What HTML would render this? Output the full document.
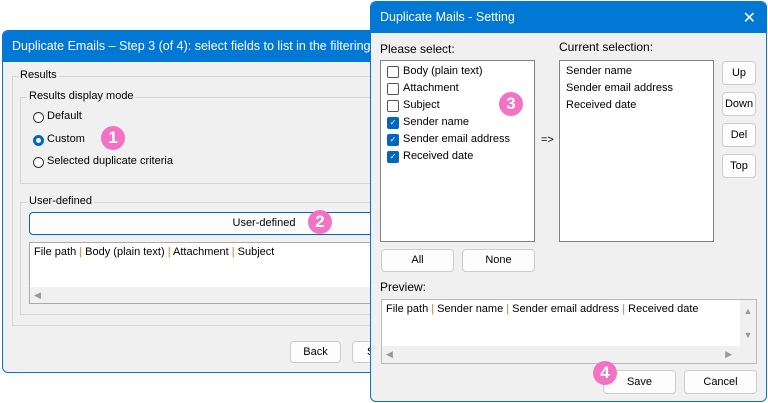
<!DOCTYPE html><html><head><style>
body{margin:0;width:768px;height:403px;background:#fff;position:relative;overflow:hidden;font-family:"Liberation Sans",sans-serif;font-size:11px;color:#000}
.a{position:absolute}
.dlg{background:#f0f0f0;border:1px solid #0078d4;border-radius:6px;overflow:hidden}
.tb{background:#0078d4;color:#fff;font-size:12.5px;position:absolute;left:0;right:0;top:0}
.gb{border:1px solid #d5d5d5;position:absolute}
.gl{position:absolute;background:#f0f0f0;padding:0 2px;top:-8px;left:6px}
.btn{position:absolute;background:#fdfdfd;border:1px solid #ccc;border-radius:4px;text-align:center;box-sizing:border-box}
.box{position:absolute;background:#fff;border:1px solid #828282;box-sizing:border-box}
.rad{position:absolute;width:11px;height:11px;border:1px solid #333;border-radius:50%;box-sizing:border-box;background:#fff}
.cb{position:absolute;width:12px;height:12px;border:1px solid #555;border-radius:2px;box-sizing:border-box;left:6px;background:#fff}
.cb.on{background:#0067c0;border-color:#0067c0;color:#fff;font-size:8px;line-height:10px;text-align:center}
.bd{position:absolute;width:24px;height:24px;border-radius:50%;background:#f472c3;color:#fff;font-weight:bold;font-size:17px;text-align:center;line-height:24px}
.s{color:#d08020}
</style></head><body>
<div class="a dlg" style="left:2px;top:30px;width:380px;height:341px">
 <div class="tb" style="height:31px;line-height:31px;padding-left:9px;white-space:nowrap">Duplicate Emails – Step 3 (of 4): select fields to list in the filtering results</div>
 <div class="gb" style="left:9px;top:45px;width:380px;height:248px"><div class="gl" style="left:5px">Results</div></div>
 <div class="gb" style="left:17px;top:66px;width:380px;height:85px"><div class="gl">Results display mode</div></div>
 <div class="rad" style="left:30px;top:81px"></div><div class="a" style="left:44px;top:79px">Default</div>
 <div class="rad" style="left:30px;top:104px;border:3px solid #0067c0"></div><div class="a" style="left:44px;top:102px">Custom</div>
 <div class="rad" style="left:30px;top:126px"></div><div class="a" style="left:44px;top:124px">Selected duplicate criteria</div>
 <div class="gb" style="left:17px;top:171px;width:380px;height:111px"><div class="gl">User-defined</div></div>
 <div class="btn" style="left:26px;top:181px;width:470px;height:23px;border-color:#0067c0;line-height:21px">User-defined</div>
 <div class="box" style="left:26px;top:211px;width:380px;height:62px;border-color:#aaa"><div class="a" style="left:4px;top:3px">File path <span class="s">|</span> Body (plain text) <span class="s">|</span> Attachment <span class="s">|</span> Subject</div><div class="a" style="left:0;right:0;bottom:0;height:16px;background:#f0f0f0;color:#999;font-size:9px;padding-left:4px;line-height:16px">◀</div></div>
 <div class="btn" style="left:287px;top:310px;width:51px;height:22px;line-height:20px">Back</div>
 <div class="btn" style="left:349px;top:310px;width:51px;height:22px;line-height:20px;text-align:left;padding-left:14px">S</div>
</div>
<div class="bd" style="left:101px;top:126px">1</div>
<div class="bd" style="left:308px;top:210px">2</div>
<div class="a dlg" style="left:370px;top:1px;width:395px;height:399px">
 <div class="tb" style="height:31px;line-height:31px;padding-left:9px">Duplicate Mails - Setting<span style="position:absolute;right:10px;font-size:16px;font-weight:normal;font-family:'DejaVu Sans',sans-serif">✕</span></div>
 <div class="a" style="left:9px;top:40px;font-size:12px">Please select:</div>
 <div class="a" style="left:188px;top:38px;font-size:12px">Current selection:</div>
 <div class="box" style="left:9px;top:58px;width:155px;height:182px">
  <div class="cb" style="top:5px"></div><div class="a" style="left:22px;top:4px">Body (plain text)</div>
  <div class="cb" style="top:22px"></div><div class="a" style="left:22px;top:21px">Attachment</div>
  <div class="cb" style="top:39px"></div><div class="a" style="left:22px;top:38px">Subject</div>
  <div class="cb on" style="top:56px">✓</div><div class="a" style="left:22px;top:55px">Sender name</div>
  <div class="cb on" style="top:73px">✓</div><div class="a" style="left:22px;top:72px">Sender email address</div>
  <div class="cb on" style="top:90px">✓</div><div class="a" style="left:22px;top:89px">Received date</div>
 </div>
 <div class="a" style="left:170px;top:132px">=&gt;</div>
 <div class="box" style="left:188px;top:58px;width:155px;height:182px">
  <div class="a" style="left:6px;top:4px">Sender name</div><div class="a" style="left:6px;top:21px">Sender email address</div><div class="a" style="left:6px;top:38px">Received date</div>
 </div>
 <div class="btn" style="left:351px;top:59px;width:34px;height:24px;line-height:22px">Up</div>
 <div class="btn" style="left:351px;top:90px;width:34px;height:24px;line-height:22px">Down</div>
 <div class="btn" style="left:351px;top:121px;width:34px;height:24px;line-height:22px">Del</div>
 <div class="btn" style="left:351px;top:152px;width:34px;height:24px;line-height:22px">Top</div>
 <div class="btn" style="left:10px;top:247px;width:73px;height:23px;line-height:21px">All</div>
 <div class="btn" style="left:91px;top:247px;width:73px;height:23px;line-height:21px">None</div>
 <div class="a" style="left:9px;top:278px;font-size:12px">Preview:</div>
 <div class="box" style="left:10px;top:297px;width:376px;height:65px;border-color:#bbb"><div class="a" style="left:4px;top:3px">File path <span class="s">|</span> Sender name <span class="s">|</span> Sender email address <span class="s">|</span> Received date</div>
  <div class="a" style="right:0;top:0;width:16px;height:47px;background:#f0f0f0;color:#999;font-size:9px;text-align:center"><div style="margin-top:6px">▲</div><div style="margin-top:14px">▼</div></div>
  <div class="a" style="left:0;right:0;bottom:0;height:17px;background:#f0f0f0;color:#999;font-size:9px;line-height:17px;padding-left:4px">◀<span style="position:absolute;right:24px">▶</span></div></div>
 <div class="btn" style="left:232px;top:368px;width:73px;height:24px;line-height:22px">Save</div>
 <div class="btn" style="left:313px;top:368px;width:73px;height:24px;line-height:22px">Cancel</div>
</div>
<div class="bd" style="left:499px;top:92px">3</div>
<div class="bd" style="left:593px;top:361px">4</div>
</body></html>
